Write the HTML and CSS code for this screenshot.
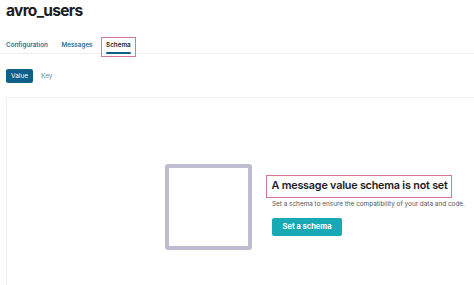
FILE: index.html
```html
<!DOCTYPE html>
<html lang="en">
<head>
  <meta charset="UTF-8" />
  <meta name="viewport" content="width=device-width, initial-scale=1.0"/>
  <title>avro_users</title>
  <link rel="stylesheet" href="styles.css">
</head>
<body>
  <h1 class="topic-title">avro_users</h1>

  <nav class="tabs">
    <a class="tab">Configuration</a>
    <a class="tab">Messages</a>
    <a class="tab active highlight">Schema</a>
  </nav>

  <div class="toggle">
    <button class="toggle-btn selected">Value</button>
    <button class="toggle-btn">Key</button>
  </div>

  <section class="panel">
    <div class="empty-state">
      <div class="empty-art"></div>
      <div class="empty-text">
        <h2 class="empty-title highlight">A message value schema is not set</h2>
        <p class="empty-desc">Set a schema to ensure the compatibility of your data and code.</p>
        <button class="primary-btn">Set a schema</button>
      </div>
    </div>
  </section>
</body>
</html>
```

FILE: styles.css
```css
:root {
  --text-dark: #1c1c1e;
  --link-blue: #2f6f94;
  --navy: #0f6188;
  --teal: #17aab5;
  --pink: #d7769d;
  --line: #eceef0;
}

* {
  margin: 0;
  padding: 0;
  box-sizing: border-box;
  font-family: 'Inter', 'Liberation Sans', sans-serif;
}

html, body {
  overflow: hidden;
}

body {
  background: #ffffff;
  color: var(--text-dark);
  padding: 0 0 0 6px;
  width: 474px;
  height: 285px;
}

.topic-title {
  font-size: 15.5px;
  font-weight: 700;
  letter-spacing: -0.7px;
  line-height: 22px;
}

/* Tabs */
.tabs {
  display: flex;
  gap: 3.5px;
  margin-top: 15px;
  margin-left: -5px;
  border-bottom: 1px solid var(--line);
  height: 17px;
}

.tab {
  font-size: 6.3px;
  font-weight: 600;
  color: var(--link-blue);
  padding: 3px 4px 0;
  border: 1.5px solid transparent;
  height: 20px;
  line-height: 9px;
}

.tab.active {
  color: var(--text-dark);
}

.tab.active::after {
  content: '';
  display: block;
  height: 2px;
  margin-top: 2px;
  background: var(--navy);
  border-radius: 1px;
}

.highlight {
  border: 1.5px solid var(--pink);
}

/* Value / Key toggle */
.toggle {
  display: flex;
  align-items: center;
  gap: 3px;
  margin-top: 15px;
}

.toggle-btn {
  font-size: 6.5px;
  border: none;
  background: none;
  color: #6b8ba0;
  height: 14px;
  padding: 0 5px;
  border-radius: 2px;
}

.toggle-btn.selected {
  background: var(--navy);
  color: #ffffff;
}

/* Panel */
.panel {
  margin-top: 14px;
  width: 520px;
  height: 220px;
  border-top: 1.5px solid var(--line);
  border-left: 1.5px solid var(--line);
  padding: 66px 0 0 158px;
}

.empty-state {
  display: flex;
  align-items: center;
  gap: 14px;
}

.empty-art {
  width: 87px;
  height: 86px;
  border: 4.5px solid #bcbdd0;
  border-radius: 3px;
  flex-shrink: 0;
}

.empty-text {
  display: flex;
  flex-direction: column;
  align-items: flex-start;
  margin-top: -4px;
}

.empty-title {
  font-size: 10.8px;
  font-weight: 600;
  letter-spacing: -0.2px;
  padding: 3px 3px 4px 4.5px;
  line-height: 14px;
}

.empty-desc {
  font-size: 6.4px;
  color: #555;
  margin: 2px 0 0 6px;
}

.primary-btn {
  margin: 10px 0 0 6px;
  width: 70px;
  height: 18px;
  border: none;
  border-radius: 2px;
  background: var(--teal);
  color: #ffffff;
  font-size: 7.5px;
  font-weight: 700;
}
```
